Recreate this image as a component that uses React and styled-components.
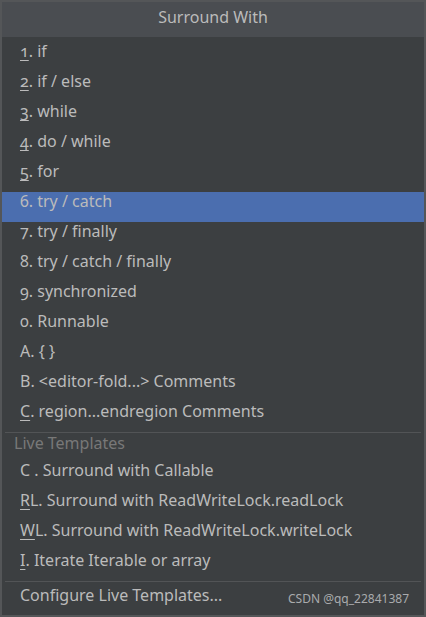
import React from "react"
import styled, { createGlobalStyle } from "styled-components"

const GlobalStyle = createGlobalStyle`
  html, body {
    margin: 0;
    padding: 0;
    background: #3c3f41;
  }
`

const Popup = styled.div`
  position: relative;
  box-sizing: border-box;
  width: 426px;
  height: 617px;
  background: #3c3f41;
  border: 2px solid #545658;
  font-family: "Noto Sans", "Open Sans", sans-serif;
  font-size: 16px;
  color: #bbbbbb;
  overflow: hidden;
`

const Header = styled.div`
  height: 35px;
  box-sizing: border-box;
  padding-bottom: 5px;
  display: flex;
  align-items: center;
  justify-content: center;
  background: #4a4d51;
  font-size: 16px;
  color: #bbbbbb;
`

const List = styled.div`
  padding-top: 5px;
  display: flex;
  flex-direction: column;
`

const Row = styled.div`
  height: 30px;
  display: flex;
  align-items: center;
  padding-left: 18px;
  padding-bottom: ${({ $footer }) => ($footer ? "5px" : "12px")};
  box-sizing: border-box;
  white-space: pre;
  background: ${({ $selected }) => ($selected ? "#4b6eaf" : "transparent")};
  font-variant-numeric: oldstyle-nums;
`

const Key = styled.span`
  text-decoration: ${({ $u }) => ($u ? "underline" : "none")};
  text-underline-offset: 3px;
  text-decoration-thickness: 1px;
`

const Separator = styled.div`
  height: 1px;
  margin: 0 3px;
  background: #525456;
`

const SectionTitle = styled.div`
  height: 28px;
  box-sizing: border-box;
  display: flex;
  align-items: center;
  padding-left: 12px;
  padding-bottom: 8px;
  color: #787878;
`

const Watermark = styled.div`
  position: absolute;
  right: 15px;
  bottom: 8px;
  font-family: "Noto Sans", sans-serif;
  font-size: 12px;
  color: #a9abad;
`

const items = [
  { key: "1", u: true, label: "if" },
  { key: "2", u: true, label: "if / else" },
  { key: "3", u: true, label: "while" },
  { key: "4", u: true, label: "do / while" },
  { key: "5", u: true, label: "for" },
  { key: "6", label: "try / catch", selected: true },
  { key: "7", label: "try / finally" },
  { key: "8", label: "try / catch / finally" },
  { key: "9", label: "synchronized" },
  { key: "0", label: "Runnable" },
  { key: "A", label: "{ }" },
  { key: "B", label: "<editor-fold...> Comments" },
  { key: "C", u: true, label: "region...endregion Comments" },
]

const templates = [
  { key: "C", sep: " .", label: "Surround with Callable" },
  { key: "R", rest: "L", u: true, label: "Surround with ReadWriteLock.readLock" },
  { key: "W", rest: "L", u: true, label: "Surround with ReadWriteLock.writeLock" },
  { key: "I", u: true, label: "Iterate Iterable or array" },
]

const App = () => {
  return (
    <>
      <GlobalStyle />
      <Popup>
        <Header>Surround With</Header>
        <List>
          {items.map((it, i) => (
            <Row key={i} $selected={it.selected}>
              <Key $u={it.u}>{it.key}</Key>. {it.label}
            </Row>
          ))}
        </List>
        <Separator />
        <SectionTitle>Live Templates</SectionTitle>
        {templates.map((it, i) => (
          <Row key={i}>
            <Key $u={it.u}>{it.key}</Key>
            {it.rest || ""}
            {it.sep || "."} {it.label}
          </Row>
        ))}
        <Separator />
        <Row $footer>Configure Live Templates...</Row>
        <Watermark>CSDN @qq_22841387</Watermark>
      </Popup>
    </>
  )
}

export default App
